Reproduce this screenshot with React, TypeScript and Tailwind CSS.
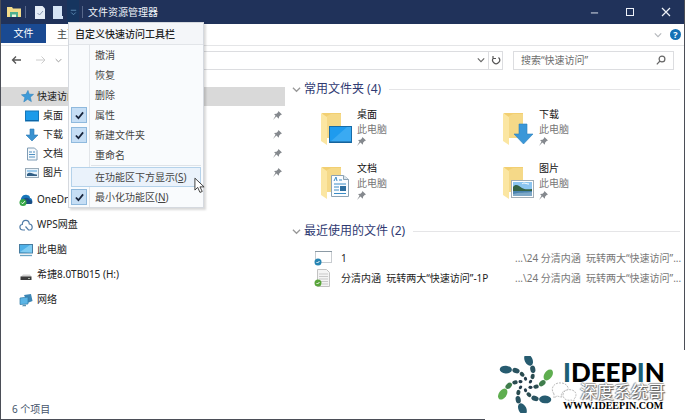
import React from "react";

type IconName = "desktop" | "download" | "document" | "picture";

function Chevron({ className = "size-[10px]" }: { className?: string }) {
  return (
    <svg viewBox="0 0 10 10" className={`shrink-0 ${className}`} fill="none" stroke="currentColor" strokeWidth="1.4">
      <path d="M1 3l4 4 4-4" />
    </svg>
  );
}

function Pin() {
  return (
    <svg viewBox="0 0 10 10" className="size-[9px] shrink-0 text-[#85898e]">
      <path d="M6 0l4 4-1.500.400-1.800 1.900-.200 2.300L3.800 6.200 0 10l2.800-4.800L1.200 3.300l2.700-.200L5.600 1.500z" fill="currentColor" />
    </svg>
  );
}

function SmallIcon({ name }: { name: IconName }) {
  return (
    <svg viewBox="0 0 14 14" className="size-[14px] shrink-0">
      {name === "desktop" && (
        <>
          <rect x="0.500" y="2" width="13" height="10" fill="#1d9bea" stroke="#1676b8" />
          <path d="M1 11.500h12" stroke="#0d65a5" />
        </>
      )}
      {name === "download" && <path d="M5 1h4v6h4l-6 6-6-6h4z" fill="#3a92d0" stroke="#2b7bb5" strokeWidth="0.600" />}
      {name === "document" && (
        <>
          <path d="M2.500 1h7l2.500 2.500V13h-9.500z" fill="#f5f9fc" stroke="#7f9cb5" />
          <path d="M4 5h3M4 7.500h6M4 10h6M8 5h2" stroke="#4e8fc0" />
        </>
      )}
      {name === "picture" && (
        <>
          <rect x="0.500" y="2.500" width="13" height="9" fill="#e8f3fb" stroke="#9aabb8" />
          <path d="M2 8c3-3 5 0 10 .500V10H2z" fill="#315f86" />
          <path d="M2 4h10v2H2z" fill="#9bcaec" />
        </>
      )}
    </svg>
  );
}

function FolderIcon({ name }: { name: IconName }) {
  return (
    <svg viewBox="0 0 34 34" className="h-[34px] w-[34px] shrink-0">
      <path d="M2 1h19v25H6z" fill="#f2cf72" />
      <path d="M7 4l4-2h10v24H7z" fill="#f5d988" />
      <path d="M1 1l6 4v28l-6-4z" fill="#fbe6a2" />
      {name === "desktop" && (
        <>
          <rect x="9.500" y="14.500" width="22" height="16" fill="#1e9bee" stroke="#176ca8" />
          <path d="M10 30L27 15h4v15z" fill="#3aaaf2" />
          <path d="M10 30h21" stroke="#155a90" />
        </>
      )}
      {name === "download" && <path d="M17 12h8v10h6l-9.500 10L12 22h5z" fill="#3a97d8" stroke="#2d82be" strokeWidth="0.600" />}
      {name === "document" && (
        <>
          <path d="M11.500 9.500h12l5 4v17h-17z" fill="#fbfdff" stroke="#8ca3b4" />
          <path d="M23.500 9.500v4h5" fill="#dbe6ee" stroke="#8ca3b4" />
          <path d="M14 15l2-4 1 4M19 14h3M14 18h12M14 21h5M14 24h5M14 27.500h12" stroke="#3b8cc5" fill="none" />
          <path d="M20 20h6v5h-6z" fill="#2e6e9f" />
        </>
      )}
      {name === "picture" && (
        <>
          <rect x="9.500" y="14.500" width="22" height="17" fill="#fff" stroke="#a2adb5" />
          <path d="M11 16h19v8H11z" fill="#8cc5f0" />
          <path d="M11 21c3-4 6-1 9 1s7 1 10 1v3H11z" fill="#356344" />
          <path d="M11 25h19v5H11z" fill="#4a84b0" />
          <path d="M11 28c6-2 12-1 19-2v4H11z" fill="#7fa9c8" />
          <path d="M20 18c2-2 4 0 7 0" stroke="#fff" fill="none" />
        </>
      )}
    </svg>
  );
}

function StarIcon() {
  return (
    <svg viewBox="0 0 14 14" className="size-[13px] shrink-0">
      <path d="M7.500.500l1.400 4 4.600.200-3.500 3 1.200 4.800-4.100-2.500L3 12.800l1.200-4.700L.500 5.200l4.800-.500z" fill="#3d9ad8" stroke="#2980bc" strokeWidth="0.600" />
    </svg>
  );
}

function OneDriveIcon() {
  return (
    <svg viewBox="0 0 14 14" className="size-[14px] shrink-0">
      <path d="M2 9C1 5 4 1 8 2c3 0 3 3 3 3 3 0 3 6 0 6H4z" fill="#1876ba" />
      <path d="M3 8c2-4 6-4 8-1 3 0 3 4 1 4H5z" fill="#1b4d83" />
      <circle cx="4" cy="9.500" r="3.500" fill="#37a747" />
      <path d="M2.300 9.500l1.300 1.300 2.300-2.600" stroke="#fff" fill="none" />
    </svg>
  );
}

function CloudIcon() {
  return (
    <svg viewBox="0 0 14 14" className="size-[14px] shrink-0" fill="none" stroke="#527da8" strokeWidth="1.200">
      <path d="M6 12H4C0 12 0 6.500 3.300 6.500 3.300 1 10 1 10.300 6c4 .300 3.500 6 .700 6H9.500L6.500 8.500" />
    </svg>
  );
}

function ComputerIcon() {
  return (
    <svg viewBox="0 0 14 14" className="size-[14px] shrink-0">
      <rect x="0.500" y="1.500" width="13" height="8.500" fill="#4fb1e8" stroke="#477c9f" />
      <path d="M1 9L11 2h2v7.500z" fill="#80ccf2" />
      <path d="M1 12.500h12" stroke="#69a4c4" strokeWidth="1.300" />
    </svg>
  );
}

function DriveIcon() {
  return (
    <svg viewBox="0 0 14 14" className="size-[14px] shrink-0">
      <path d="M4 6.500h7l1.500 2.500h-11z" fill="#d3d3d3" />
      <path d="M1.500 8.500h11V12h-11z" fill="#3c3c3c" />
      <path d="M9 10.500h2" stroke="#aab5aa" />
    </svg>
  );
}

function NetworkIcon() {
  return (
    <svg viewBox="0 0 14 14" className="size-[14px] shrink-0">
      <path d="M5 2l7-1 1.500 7-5 2z" fill="#3d86b5" />
      <path d="M1 5l8-1v7l-8 .500z" fill="#5bb5e6" stroke="#327ba8" strokeWidth="0.700" />
      <path d="M4 12l3-.300v1.500H3z" fill="#5a93b2" />
    </svg>
  );
}

function TitleBar() {
  return (
    <header className="flex h-6 items-center bg-[#20325a] pl-[6px] text-[#eef2f8]">
      <svg viewBox="0 0 14 12" className="h-[12px] w-[14px] shrink-0">
        <path d="M0 1h5l1 1.500h8V11H0z" fill="#f3dc8a" />
        <path d="M3 6h8v5H3z" fill="#4fb08f" />
        <path d="M5 8.500h4V11H5z" fill="#e9f5dd" />
      </svg>
      <span className="ml-1 h-3 w-px bg-[#57678a]" />
      <button aria-label="属性" className="ml-[9px]">
        <svg viewBox="0 0 10 13" className="h-[13px] w-[10px]">
          <path d="M0 0h7.500L10 2.500V13H0z" fill="#e5edf7" />
          <path d="M2.500 7l2 2 3.500-4" stroke="#8a9ab4" fill="none" />
        </svg>
      </button>
      <button aria-label="新建文件夹" className="ml-2">
        <svg viewBox="0 0 10 13" className="h-[13px] w-[10px]">
          <path d="M0 0h9v10h1v3H0z" fill="#d5e4f6" />
        </svg>
      </button>
      <button aria-label="自定义快速访问工具栏" className="ml-1 flex h-full w-[12px] items-center justify-center bg-[#16355f] text-[#5f8db5]">
        <svg viewBox="0 0 10 10" className="size-[9px]" fill="none" stroke="currentColor">
          <path d="M2 2.500h6M2.500 5L5 7.500 7.500 5" />
        </svg>
      </button>
      <span className="ml-[3px] h-3 w-px bg-[#57678a]" />
      <h1 className="ml-[5px] text-[10px] leading-4">文件资源管理器</h1>
      <div className="ml-auto flex h-full items-center">
        <button aria-label="最小化" className="flex h-full w-9 items-center justify-center">
          <svg viewBox="0 0 10 10" className="size-[9px]" stroke="currentColor"><path d="M1 5.500h8" /></svg>
        </button>
        <button aria-label="最大化" className="flex h-full w-9 items-center justify-center">
          <svg viewBox="0 0 10 10" className="size-[10px]" fill="none" stroke="currentColor"><rect x="1.500" y="1.500" width="7" height="7" /></svg>
        </button>
        <button aria-label="关闭" className="flex h-full w-9 items-center justify-center">
          <svg viewBox="0 0 10 10" className="size-[10px]" stroke="currentColor" strokeWidth="1.200"><path d="M1 1l8 8M9 1L1 9" /></svg>
        </button>
      </div>
    </header>
  );
}

function Ribbon() {
  return (
    <div className="flex h-[22px] items-center border-b border-[#e4e5e7] text-[10px]">
      <button className="h-[19px] w-[45px] self-start bg-[#1a4a92] text-white">文件</button>
      <button className="ml-[11px] text-[#444]">主页</button>
      <button aria-label="展开功能区" className="ml-auto text-[#b5b8bc]">
        <Chevron className="size-[8px]" />
      </button>
      <button aria-label="帮助" className="mr-[3px] ml-2 size-[11px] rounded-full bg-[#1471b5] text-[9px] leading-[11px] font-bold text-white">?</button>
    </div>
  );
}

function AddressBar() {
  return (
    <div className="flex h-[28px] items-center px-[10px]">
      <button aria-label="后退" className="text-[#555]">
        <svg viewBox="0 0 12 10" className="h-[10px] w-[12px]" fill="none" stroke="currentColor" strokeWidth="1.300"><path d="M10 5H1.500M5 1.500L1.500 5 5 8.500" /></svg>
      </button>
      <button aria-label="前进" className="ml-3 text-[#ccc]">
        <svg viewBox="0 0 12 10" className="h-[10px] w-[12px]" fill="none" stroke="currentColor"><path d="M1 5h8.500M6.500 1.500L10 5 6.500 8.500" /></svg>
      </button>
      <button aria-label="最近位置" className="ml-2 text-[#999]">
        <Chevron className="size-[7px]" />
      </button>
      <div className="ml-5 flex h-[19px] grow items-center border border-[#dcdde0]">
        <input aria-label="地址" className="h-full min-w-0 grow bg-transparent outline-none" />
        <button aria-label="历史地址" className="px-[3px] text-[#666]"><Chevron className="size-[8px]" /></button>
        <button aria-label="刷新" className="flex h-full w-[14px] items-center justify-center border-l border-[#dcdde0] text-[#555]">
          <svg viewBox="0 0 10 10" className="size-[10px]" fill="none" stroke="currentColor" strokeWidth="1.200">
            <path d="M7.500 2.500a3.500 3.500 0 1 1-5 .300M2 1v2.500h3" />
          </svg>
        </button>
      </div>
      <div className="ml-[10px] flex h-[19px] w-[161px] shrink-0 items-center border border-[#dcdde0] px-[7px]">
        <input aria-label="搜索" placeholder="搜索“快速访问”" className="min-w-0 grow bg-transparent text-[10px] outline-none placeholder:text-[#6d6d6d]" />
        <svg viewBox="0 0 10 10" className="size-[10px] shrink-0" fill="none" stroke="#666" strokeWidth="1.200">
          <circle cx="6" cy="4" r="2.900" />
          <path d="M4 6L.800 9.300" />
        </svg>
      </div>
    </div>
  );
}

const folders: { icon: IconName; label: string }[] = [
  { icon: "desktop", label: "桌面" },
  { icon: "download", label: "下载" },
  { icon: "document", label: "文档" },
  { icon: "picture", label: "图片" },
];

const places: { icon: React.ReactNode; label: string }[] = [
  { icon: <OneDriveIcon />, label: "OneDrive" },
  { icon: <CloudIcon />, label: "WPS网盘" },
  { icon: <ComputerIcon />, label: "此电脑" },
  { icon: <DriveIcon />, label: "希捷8.0TB015 (H:)" },
  { icon: <NetworkIcon />, label: "网络" },
];

function NavPane() {
  return (
    <nav className="w-[284px] shrink-0 pt-[13px] text-[10px] text-[#222]">
      <a href="#quick" className="flex h-[19px] items-center gap-[3px] bg-[#d9d9d9] pl-[20px]">
        <StarIcon />
        快速访问
      </a>
      {folders.map((p) => (
        <a key={p.label} href="#pinned" className="flex h-[19px] items-center gap-1 pr-[3px] pl-[24px]">
          <SmallIcon name={p.icon} />
          <span className="grow">{p.label}</span>
          <Pin />
        </a>
      ))}
      <div className="pt-[5px]">
        {places.map((p) => (
          <a key={p.label} href="#place" className="flex h-[25px] items-center gap-1 pl-[18px]">
            {p.icon}
            {p.label}
          </a>
        ))}
      </div>
    </nav>
  );
}

function GroupHeading({ children }: { children: React.ReactNode }) {
  return (
    <div className="flex h-5 items-center text-[12px] text-[#2f3a72]">
      <Chevron className="mr-[3px] size-[9px] text-[#999]" />
      <h2 className="leading-5">{children}</h2>
      <span className="mr-[4px] ml-[8px] h-px grow bg-[#e5e5e7]" />
    </div>
  );
}

function Content() {
  return (
    <main className="min-w-0 grow pt-[5px] pl-[7px]">
      <GroupHeading>常用文件夹 (4)</GroupHeading>
      <div className="grid grid-cols-[182px_1fr] pt-2 pl-[28px]">
        {folders.map((f) => (
          <a key={f.label} href="#folder" className="flex h-[54px] items-start gap-[3px] text-[10px] leading-[15px]">
            <span className="pt-[5px]"><FolderIcon name={f.icon} /></span>
            <span className="flex flex-col">
              <span className="text-[#111]">{f.label}</span>
              <span className="text-[#777]">此电脑</span>
              <Pin />
            </span>
          </a>
        ))}
      </div>
      <div className="pt-[6px]">
        <GroupHeading>最近使用的文件 (2)</GroupHeading>
      </div>
      <table className="mt-[7px] w-full text-[10px] leading-5">
        <tbody>
          <tr>
            <td className="w-[49px] pl-[22px]">
              <svg viewBox="0 0 19 16" className="h-[16px] w-[19px]">
                <rect x="1.500" y="1.500" width="16" height="11" fill="#fff" stroke="#c8ccd0" />
                <path d="M1 1.500h17" stroke="#8c9aa5" />
                <circle cx="4" cy="12" r="3.500" fill="#2785b3" />
                <path d="M2.500 12l1 1 2-2" stroke="#fff" fill="none" />
              </svg>
            </td>
            <td className="text-[#222]">1</td>
            <td className="w-[169px] whitespace-pre text-[#777]">...\24 分清内涵  玩转两大“快速访问”...</td>
          </tr>
          <tr>
            <td className="pl-[22px]">
              <svg viewBox="0 0 19 18" className="h-[18px] w-[19px]">
                <path d="M3.500.500h9l3 3v14h-12z" fill="#f4f4f4" stroke="#c2c2c2" />
                <path d="M5 5h9M5 7.500h9M5 10h9M7 12.500h7M8 15h6" stroke="#c9c9c9" />
                <circle cx="4" cy="14" r="3.500" fill="#5aa53c" />
                <path d="M2.500 14l1 1 2-2" stroke="#fff" fill="none" />
              </svg>
            </td>
            <td className="whitespace-pre text-[#222]">分清内涵  玩转两大“快速访问”-1P</td>
            <td className="whitespace-pre text-[#777]">...\24 分清内涵  玩转两大“快速访问”...</td>
          </tr>
        </tbody>
      </table>
    </main>
  );
}

function MenuItem({ label, hotkey, checked, active }: { label: string; hotkey?: string; checked?: boolean; active?: boolean }) {
  return (
    <button
      role="menuitemcheckbox"
      aria-checked={!!checked}
      className={`flex h-5 w-full items-center border text-left ${active ? "border-[#b5d2ea] bg-[#eaf2fb]" : "border-transparent"}`}
    >
      <span className={`flex h-[14px] w-[14px] items-center justify-center ${checked ? "bg-[#c6def5] outline outline-[#8fb9dd]" : ""}`}>
        {checked && (
          <svg viewBox="0 0 10 10" className="size-[9px]" fill="none" stroke="#17243c" strokeWidth="2">
            <path d="M1 5l2.800 3L9 1.500" />
          </svg>
        )}
      </span>
      <span className="ml-[9px]">
        {label}
        {hotkey && <>(<u>{hotkey}</u>)</>}
      </span>
    </button>
  );
}

function CustomizeMenu() {
  return (
    <div role="menu" className="absolute top-[22px] left-[67px] w-[136px] border border-[#d5d9df] bg-[#f9fbfd] text-[10px] text-[#444] shadow-[2px_2px_2px_rgba(0,0,0,0.15)]">
      <div className="h-[22px] border-b border-[#e2e5e9] bg-[#f4f6f9] pl-[6px] leading-[22px] font-medium text-[#222]">自定义快速访问工具栏</div>
      <div className="bg-[linear-gradient(to_right,transparent_20px,#e2e5e9_20px,#e2e5e9_21px,transparent_21px)] px-[2px]">
        <MenuItem label="撤消" />
        <MenuItem label="恢复" />
        <MenuItem label="删除" />
        <MenuItem label="属性" checked />
        <MenuItem label="新建文件夹" checked />
        <MenuItem label="重命名" />
        <div className="ml-[20px] h-[2px] border-t border-[#dfe3e8]" />
        <MenuItem label="在功能区下方显示" hotkey="S" active />
        <MenuItem label="最小化功能区" hotkey="N" checked />
      </div>
    </div>
  );
}

function LogoMark() {
  const arms = ["#275c70", "#275c70", "#5fae50", "#275c70", "#275c70", "#5fae50"];
  return (
    <svg viewBox="-84 -84 168 168" className="mt-[-1px] size-[57px] shrink-0">
      {arms.map((color, i) => (
        <g key={i} transform={`rotate(${i * 60})`}>
          <ellipse cx="-58" cy="-44" rx="18" ry="11.500" fill={color} transform="rotate(4 -58 -44)" />
          <ellipse cx="-28" cy="-41" rx="11" ry="7.500" fill={i % 3 === 2 ? "#3f7d4c" : "#2a5360"} transform="rotate(18 -28 -41)" />
          <ellipse cx="-10" cy="-30" rx="8" ry="6" fill="#2a4c50" transform="rotate(45 -10 -30)" />
          <ellipse cx="0" cy="-17" rx="6" ry="4.500" fill="#243d4c" transform="rotate(65 0 -17)" />
        </g>
      ))}
    </svg>
  );
}

function Watermark() {
  return (
    <aside className="absolute right-[-1px] bottom-[-1px] flex h-[70px] w-[200px] bg-white pt-[7px] pl-[12px]">
      <LogoMark />
      <div className="-ml-[3px] pt-[3px]">
        <p className="pl-[12px] font-[Lato,sans-serif] text-[26px] leading-[24px] font-black text-black">
          <span className="text-[#1c6075]">I</span>DEEP<span className="text-[#1c6075]">I</span>N
        </p>
        <div className="flex h-[16px] items-center gap-[3px]">
          <svg viewBox="0 0 26 22" className="h-[22px] w-[26px]" fill="#fff" stroke="#aaa" strokeWidth="0.800" strokeDasharray="2 1">
            <path d="M3 13C-2 6 5 1 10 2c5 0 8 4 7 7-5 0-8 4-6 7-3 0-4-1-5-1l-3 2z" />
            <path d="M12 14c0-7 12-7 13-1 0 3-1 4-2 5v2l-3-1c-4 1-8-1-8-5z" />
          </svg>
          <span className="text-[17px] leading-[16px] whitespace-nowrap text-white [text-shadow:1px_1px_1px_#555,-1px_0_1px_#888,0_-1px_1px_#999]">深度系统哥</span>
        </div>
        <p className="pl-[12px] font-['Liberation_Serif',serif] text-[10px] leading-[12px] font-bold text-black">WWW.IDEEPIN.COM</p>
      </div>
    </aside>
  );
}

export default function App() {
  return (
    <div className="relative flex min-h-screen flex-col border-x border-b border-[#4b4e57] bg-white font-['Noto_Sans','Noto_Sans_CJK_SC',sans-serif]">
      <TitleBar />
      <Ribbon />
      <AddressBar />
      <div className="flex grow">
        <NavPane />
        <Content />
      </div>
      <footer className="flex h-5 items-center pl-[11px] text-[10px] text-[#44536a]">6 个项目</footer>
      <CustomizeMenu />
      <svg viewBox="0 0 12 18" className="absolute top-[177px] left-[193px] h-[17px] w-[11px]">
        <path d="M1 1v13l3-3 2.500 5.500 2.500-1-2.500-5H11z" fill="#fff" stroke="#333" />
      </svg>
      <Watermark />
    </div>
  );
}
